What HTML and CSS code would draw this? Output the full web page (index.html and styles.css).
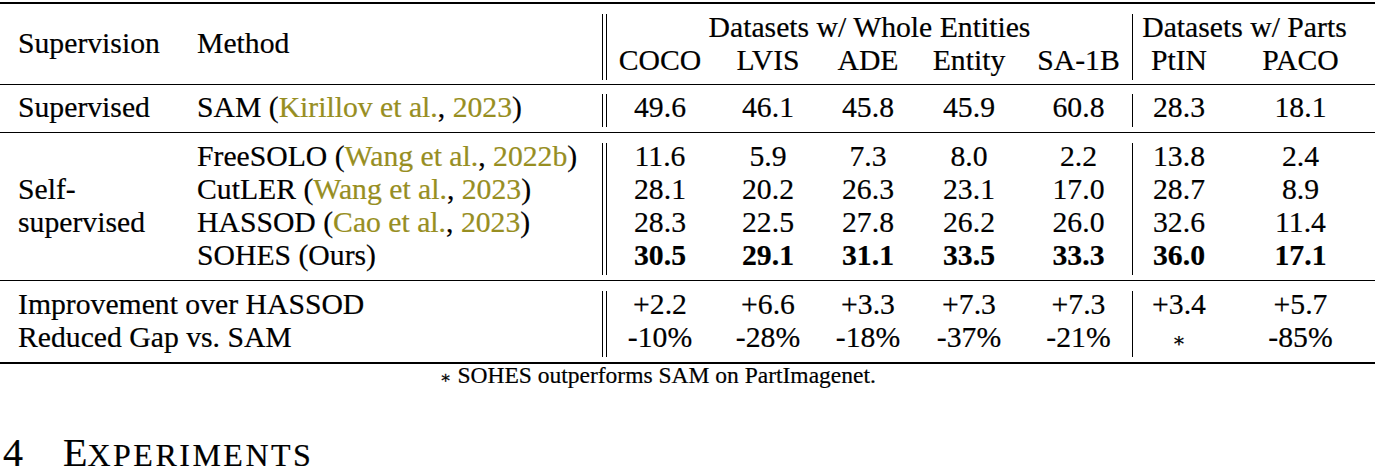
FILE: index.html
```html
<!DOCTYPE html>
<html>
<head>
<meta charset="utf-8">
<link rel="stylesheet" href="styles.css">
</head>
<body>
<div class="page">
<table class="results">
<colgroup>
<col class="c-sup"><col class="c-method"><col class="c-dbar"><col class="c-coco"><col class="c-lvis"><col class="c-ade"><col class="c-entity"><col class="c-sa1b"><col class="c-ptin"><col class="c-paco">
</colgroup>
<tbody>
<tr class="rule rule-top"><td colspan="10"></td></tr>
<tr class="row">
<td rowspan="2" class="lab lab-mid">Supervision</td>
<td rowspan="2" class="meth lab-mid">Method</td>
<td rowspan="2" class="dbar"></td>
<td colspan="5" class="num">Datasets w/ Whole Entities</td>
<td colspan="2" class="num sbar parts">Datasets w/ Parts</td>
</tr>
<tr class="row">
<td class="num">COCO</td><td class="num">LVIS</td><td class="num">ADE</td><td class="num">Entity</td><td class="num">SA-1B</td><td class="num sbar">PtIN</td><td class="num">PACO</td>
</tr>
<tr class="rule rule-mid rule-first"><td colspan="10"></td></tr>
<tr class="row">
<td class="lab">Supervised</td>
<td class="meth">SAM (<span class="cite">Kirillov et al.</span>, <span class="cite">2023</span>)</td>
<td class="dbar"></td>
<td class="num">49.6</td><td class="num">46.1</td><td class="num">45.8</td><td class="num">45.9</td><td class="num">60.8</td><td class="num sbar">28.3</td><td class="num">18.1</td>
</tr>
<tr class="rule rule-mid"><td colspan="10"></td></tr>
<tr class="row">
<td rowspan="4" class="lab self">Self-<br>supervised</td>
<td class="meth">FreeSOLO (<span class="cite">Wang et al.</span>, <span class="cite">2022b</span>)</td>
<td class="dbar"></td>
<td class="num">11.6</td><td class="num">5.9</td><td class="num">7.3</td><td class="num">8.0</td><td class="num">2.2</td><td class="num sbar">13.8</td><td class="num">2.4</td>
</tr>
<tr class="row">
<td class="meth">CutLER (<span class="cite">Wang et al.</span>, <span class="cite">2023</span>)</td>
<td class="dbar"></td>
<td class="num">28.1</td><td class="num">20.2</td><td class="num">26.3</td><td class="num">23.1</td><td class="num">17.0</td><td class="num sbar">28.7</td><td class="num">8.9</td>
</tr>
<tr class="row">
<td class="meth">HASSOD (<span class="cite">Cao et al.</span>, <span class="cite">2023</span>)</td>
<td class="dbar"></td>
<td class="num">28.3</td><td class="num">22.5</td><td class="num">27.8</td><td class="num">26.2</td><td class="num">26.0</td><td class="num sbar">32.6</td><td class="num">11.4</td>
</tr>
<tr class="row">
<td class="meth">SOHES (Ours)</td>
<td class="dbar"></td>
<td class="num best">30.5</td><td class="num best">29.1</td><td class="num best">31.1</td><td class="num best">33.5</td><td class="num best">33.3</td><td class="num sbar best">36.0</td><td class="num best">17.1</td>
</tr>
<tr class="rule rule-mid"><td colspan="10"></td></tr>
<tr class="row">
<td colspan="2" class="lab">Improvement over HASSOD</td>
<td class="dbar"></td>
<td class="num">+2.2</td><td class="num">+6.6</td><td class="num">+3.3</td><td class="num">+7.3</td><td class="num">+7.3</td><td class="num sbar">+3.4</td><td class="num">+5.7</td>
</tr>
<tr class="row">
<td colspan="2" class="lab">Reduced Gap vs. SAM</td>
<td class="dbar"></td>
<td class="num">-10%</td><td class="num">-28%</td><td class="num">-18%</td><td class="num">-37%</td><td class="num">-21%</td><td class="num sbar"><span class="ast">∗</span></td><td class="num">-85%</td>
</tr>
<tr class="rule rule-bottom"><td colspan="10"></td></tr>
</tbody>
</table>
<p class="note"><span class="ast ast-note">∗</span> SOHES outperforms SAM on PartImagenet.</p>
<h2 class="section"><span class="secnum">4</span><span class="sectitle">E<span class="sc">XPERIMENTS</span></span></h2>
</div>
</body>
</html>
```

FILE: styles.css
```css
html, body {
  margin: 0;
  padding: 0;
  background: #fff;
}

body {
  font-family: "Liberation Serif", "Times New Roman", serif;
  font-size: 29.7px;
  color: #000;
  -webkit-text-stroke: 0.2px;
}

.page {
  width: 1375px;
  padding-top: 2px;
}

.results {
  border-collapse: separate;
  border-spacing: 0;
  table-layout: fixed;
  width: 1375px;
}

.results td {
  padding: 0;
  border: 0;
  white-space: nowrap;
}

.c-sup { width: 197px; }
.c-method { width: 405px; }
.c-dbar { width: 5px; }
.c-coco { width: 106px; }
.c-lvis { width: 110px; }
.c-ade { width: 90px; }
.c-entity { width: 112px; }
.c-sa1b { width: 107px; }
.c-ptin { width: 94px; }
.c-paco { width: 149px; }

.row td {
  height: 33px;
  line-height: 27px;
  vertical-align: top;
}

.results td.lab {
  padding-left: 18px;
  text-align: left;
}

.results td.meth {
  text-align: left;
}

.results td.lab-mid {
  vertical-align: middle;
  padding-bottom: 8px;
}

.results td.self {
  vertical-align: top;
  padding-top: 30px;
  line-height: 33px;
}

.num {
  text-align: center;
}

.results td.parts {
  padding-right: 18px;
}

.best {
  font-weight: bold;
}

.cite {
  color: #978e22;
}

.dbar {
  background:
    linear-gradient(#000, #000) left top / 1px 100% no-repeat,
    linear-gradient(#000, #000) right top / 1px 100% no-repeat;
}

.sbar {
  background: linear-gradient(#000, #000) left top / 1px 100% no-repeat;
}

.rule-top td {
  height: 12px;
  background: linear-gradient(#000, #000) left top / 100% 2px no-repeat;
}

.rule-mid td {
  height: 16px;
  background: linear-gradient(#000, #000) left 5px / 100% 1px no-repeat;
}

.rule-first td {
  height: 14px;
  background-position: left 4px;
}

.rule-bottom td {
  height: 7px;
  background: linear-gradient(#000, #000) left 5px / 100% 2px no-repeat;
}

.ast {
  font-family: "DejaVu Serif", serif;
  font-size: 20px;
}

.ast-note {
  font-size: 17px;
}

.note {
  margin: -2px 0 0 0;
  padding-left: 440px;
  font-size: 23.5px;
  line-height: 26px;
}

.section {
  margin: 46px 0 0 0;
  font-weight: normal;
  font-size: 40px;
  line-height: 34px;
  display: flex;
  padding-left: 3px;
}

.secnum {
  width: 60px;
}

.sc {
  font-size: 32px;
  letter-spacing: 2.5px;
}
```
